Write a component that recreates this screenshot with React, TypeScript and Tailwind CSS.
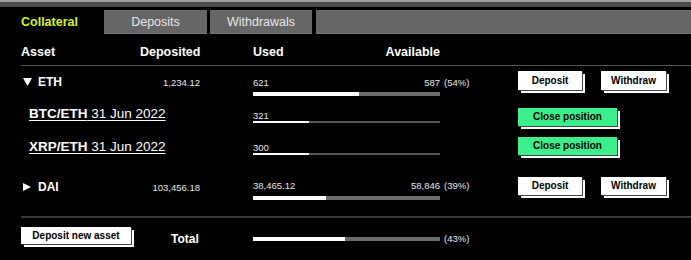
import type { ReactNode } from "react";

function Btn({ children, className, green }: { children: ReactNode; className: string; green?: boolean }) {
  return (
    <button
      className={
        "flex items-center justify-center text-[10px] font-bold text-black leading-none shadow-[1px_1px_0_#444,3px_3px_0_#fff] " +
        (green ? "bg-[#3bf08a] " : "bg-white ") +
        className
      }
    >
      {children}
    </button>
  );
}

function Bar({ fill, thick }: { fill: number; thick?: boolean }) {
  return (
    <div className={thick ? "flex h-[4px] bg-[#6b6b6b]" : "flex h-[2px] bg-[#5a5a5a]"}>
      <div className="bg-white" style={{ width: fill }} />
    </div>
  );
}

function DownTri() {
  return (
    <svg width="9" height="8" viewBox="0 0 9 8">
      <polygon points="0,0 9,0 4.5,8" fill="#fff" />
    </svg>
  );
}

function RightTri() {
  return (
    <svg width="8" height="8" viewBox="0 0 8 8">
      <polygon points="0,0 8,4 0,8" fill="#fff" />
    </svg>
  );
}

const num = "text-[9.5px] leading-[12px] text-[#e8e8e8]";

export default function App() {
  return (
    <div className="w-[691px] h-[260px] bg-black overflow-hidden text-white font-['Liberation_Sans',Arial,sans-serif]">
      {/* window top */}
      <div className="h-[2px] bg-[#a0a0a0]" />
      <div className="h-[5px] bg-[#4a4a4a]" />
      <div className="h-[3px]" />

      {/* tabs */}
      <div className="flex h-[24px] text-[12.5px] leading-[15px]">
        <div className="w-[104px] pl-[21px] pt-[5px] font-bold text-[#d4f31b]">Collateral</div>
        <div className="w-[103px] bg-[#666] pt-[5px] text-center text-[#e6e6e6] border-b border-[#777]">Deposits</div>
        <div className="w-[102px] ml-[3px] bg-[#666] pt-[5px] text-center text-[#e6e6e6] border-b border-[#777]">Withdrawals</div>
        <div className="flex-1 ml-[4px] bg-[#666] border-b border-[#777]" />
      </div>

      <div className="pl-[21px]">
        {/* header */}
        <div className="flex pt-[11px] pb-[5px] border-b border-[#555] text-[12.5px] leading-[15px] font-bold">
          <div className="w-[119px]">Asset</div>
          <div className="w-[60px] text-right">Deposited</div>
          <div className="ml-[53px] w-[187px] flex justify-between">
            <span>Used</span>
            <span>Available</span>
          </div>
        </div>

        {/* ETH */}
        <div className="flex items-start h-[38px]">
          <div className="w-[119px] mt-[9px] flex items-center h-[14px] text-[12px] leading-[14px] font-bold">
            <span className="w-[17px] pl-[2px] flex">
              <DownTri />
            </span>
            ETH
          </div>
          <div className={"w-[60px] mt-[11px] text-right " + num}>1,234.12</div>
          <div className="ml-[53px] w-[187px] mt-[11px]">
            <div className={"flex justify-between " + num}>
              <span>621</span>
              <span>587</span>
            </div>
            <div className="mt-[3px]">
              <Bar fill={106} thick />
            </div>
          </div>
          <div className={"w-[78px] pl-[4px] mt-[11px] " + num}>(54%)</div>
          <div className="mt-[5px] flex gap-[19px]">
            <Btn className="w-[64px] h-[19px]">Deposit</Btn>
            <Btn className="w-[65px] h-[19px]">Withdraw</Btn>
          </div>
        </div>

        {/* BTC/ETH */}
        <div className="flex items-start h-[32px]">
          <div className="w-[179px] pl-[8px] mt-[2px] text-[13.5px] leading-[15px] underline underline-offset-[2px] decoration-1">
            <span className="font-bold">BTC/ETH</span> 31 Jun 2022
          </div>
          <div className="ml-[53px] w-[187px] mt-[7px]">
            <div className="text-[9.5px] leading-[10px] text-[#e8e8e8]">321</div>
            <Bar fill={56} />
          </div>
          <div className="w-[78px]" />
          <div className="mt-[4px]">
            <Btn green className="w-[99px] h-[18px]">Close position</Btn>
          </div>
        </div>

        {/* XRP/ETH */}
        <div className="flex items-start h-[32px]">
          <div className="w-[179px] pl-[8px] mt-[3px] text-[13.5px] leading-[15px] underline underline-offset-[2px] decoration-1">
            <span className="font-bold">XRP/ETH</span> 31 Jun 2022
          </div>
          <div className="ml-[53px] w-[187px] mt-[7px]">
            <div className="text-[9.5px] leading-[10px] text-[#e8e8e8]">300</div>
            <Bar fill={56} />
          </div>
          <div className="w-[78px]" />
          <div className="mt-[1px]">
            <Btn green className="w-[99px] h-[18px]">Close position</Btn>
          </div>
        </div>

        {/* DAI */}
        <div className="flex items-start h-[50px] border-b-2 border-[#3a3a3a]">
          <div className="w-[119px] mt-[12px] flex items-center h-[14px] text-[12px] leading-[14px] font-bold">
            <span className="w-[17px] pl-[2px] flex">
              <RightTri />
            </span>
            DAI
          </div>
          <div className={"w-[60px] mt-[14px] text-right " + num}>103,456.18</div>
          <div className="ml-[53px] w-[187px] mt-[12px]">
            <div className={"flex justify-between " + num}>
              <span>38,465.12</span>
              <span>58,846</span>
            </div>
            <div className="mt-[4px]">
              <Bar fill={73} thick />
            </div>
          </div>
          <div className={"w-[78px] pl-[4px] mt-[12px] " + num}>(39%)</div>
          <div className="mt-[9px] flex gap-[19px]">
            <Btn className="w-[64px] h-[18px]">Deposit</Btn>
            <Btn className="w-[65px] h-[18px]">Withdraw</Btn>
          </div>
        </div>

        {/* total */}
        <div className="flex items-start">
          <div className="w-[150px] mt-[9px]">
            <Btn className="w-[110px] h-[17px]">Deposit new asset</Btn>
          </div>
          <div className="w-[82px] mt-[14px] text-[12px] leading-[14px] font-bold">Total</div>
          <div className="w-[187px] mt-[19px]">
            <Bar fill={92} thick />
          </div>
          <div className={"pl-[4px] mt-[15px] " + num}>(43%)</div>
        </div>
      </div>
    </div>
  );
}
